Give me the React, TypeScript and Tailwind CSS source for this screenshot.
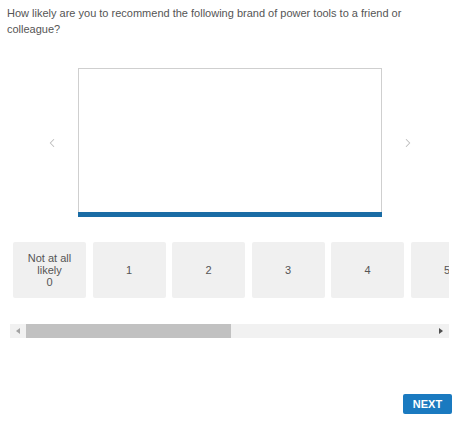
import { ChevronLeft, ChevronRight } from 'lucide-react'

const options = [
  { label: 'Not at all likely', value: '0' },
  { label: '', value: '1' },
  { label: '', value: '2' },
  { label: '', value: '3' },
  { label: '', value: '4' },
  { label: '', value: '5' },
  { label: '', value: '6' },
]

export default function App() {
  return (
    <div className="w-[474px] h-[424px] bg-white text-[#555] font-['Liberation_Sans',Arial,sans-serif] flex flex-col">
      <p className="pl-[7px] pt-[5px] pr-[40px] text-[11px] leading-[16px]">
        How likely are you to recommend the following brand of power tools to a friend or colleague?
      </p>

      <div className="mt-[31px] flex items-center">
        <div className="w-[78px] flex justify-center pl-[26px]">
          <ChevronLeft className="w-[14px] h-[14px] text-[#bcbcbc]" strokeWidth={1.75} />
        </div>
        <div className="w-[304px] h-[149px] border border-[#cfcfcf] border-b-0 flex flex-col bg-white">
          <div className="flex-1" />
          <div className="h-[5px] bg-[#1a6ca5] -mx-px" />
        </div>
        <div className="flex-1 flex justify-start pl-[19px]">
          <ChevronRight className="w-[14px] h-[14px] text-[#bcbcbc]" strokeWidth={1.75} />
        </div>
      </div>

      <div className="mt-[25px] ml-[11px] w-[438px] overflow-hidden">
        <div className="flex gap-[6.5px] pl-[2px]">
          {options.map((o) => (
            <div
              key={o.value}
              className="shrink-0 w-[73px] h-[56px] rounded-[2px] bg-[#f0f0f0] flex flex-col items-center justify-center text-[11px] leading-[12px] text-center"
            >
              {o.label && <span className="w-[50px]">{o.label}</span>}
              <span>{o.value}</span>
            </div>
          ))}
        </div>
      </div>

      <div className="mt-[26px] ml-[10px] w-[439px] h-[14px] bg-[#f1f1f1] flex items-center">
        <div className="w-[16px] flex justify-center">
          <span className="w-0 h-0 border-y-[3px] border-y-transparent border-r-[4px] border-r-[#a3a3a3]" />
        </div>
        <div className="w-[205px] h-[14px] bg-[#c1c1c1]" />
        <div className="flex-1" />
        <div className="w-[16px] flex justify-center">
          <span className="w-0 h-0 border-y-[3px] border-y-transparent border-l-[4px] border-l-[#505050]" />
        </div>
      </div>

      <div className="mt-[56px] flex justify-end pr-[22px]">
        <button
          type="button"
          className="w-[49px] h-[20px] rounded-[2px] bg-[#1a7ac0] text-white text-[11px] font-bold flex items-center justify-center"
        >
          NEXT
        </button>
      </div>
    </div>
  )
}
